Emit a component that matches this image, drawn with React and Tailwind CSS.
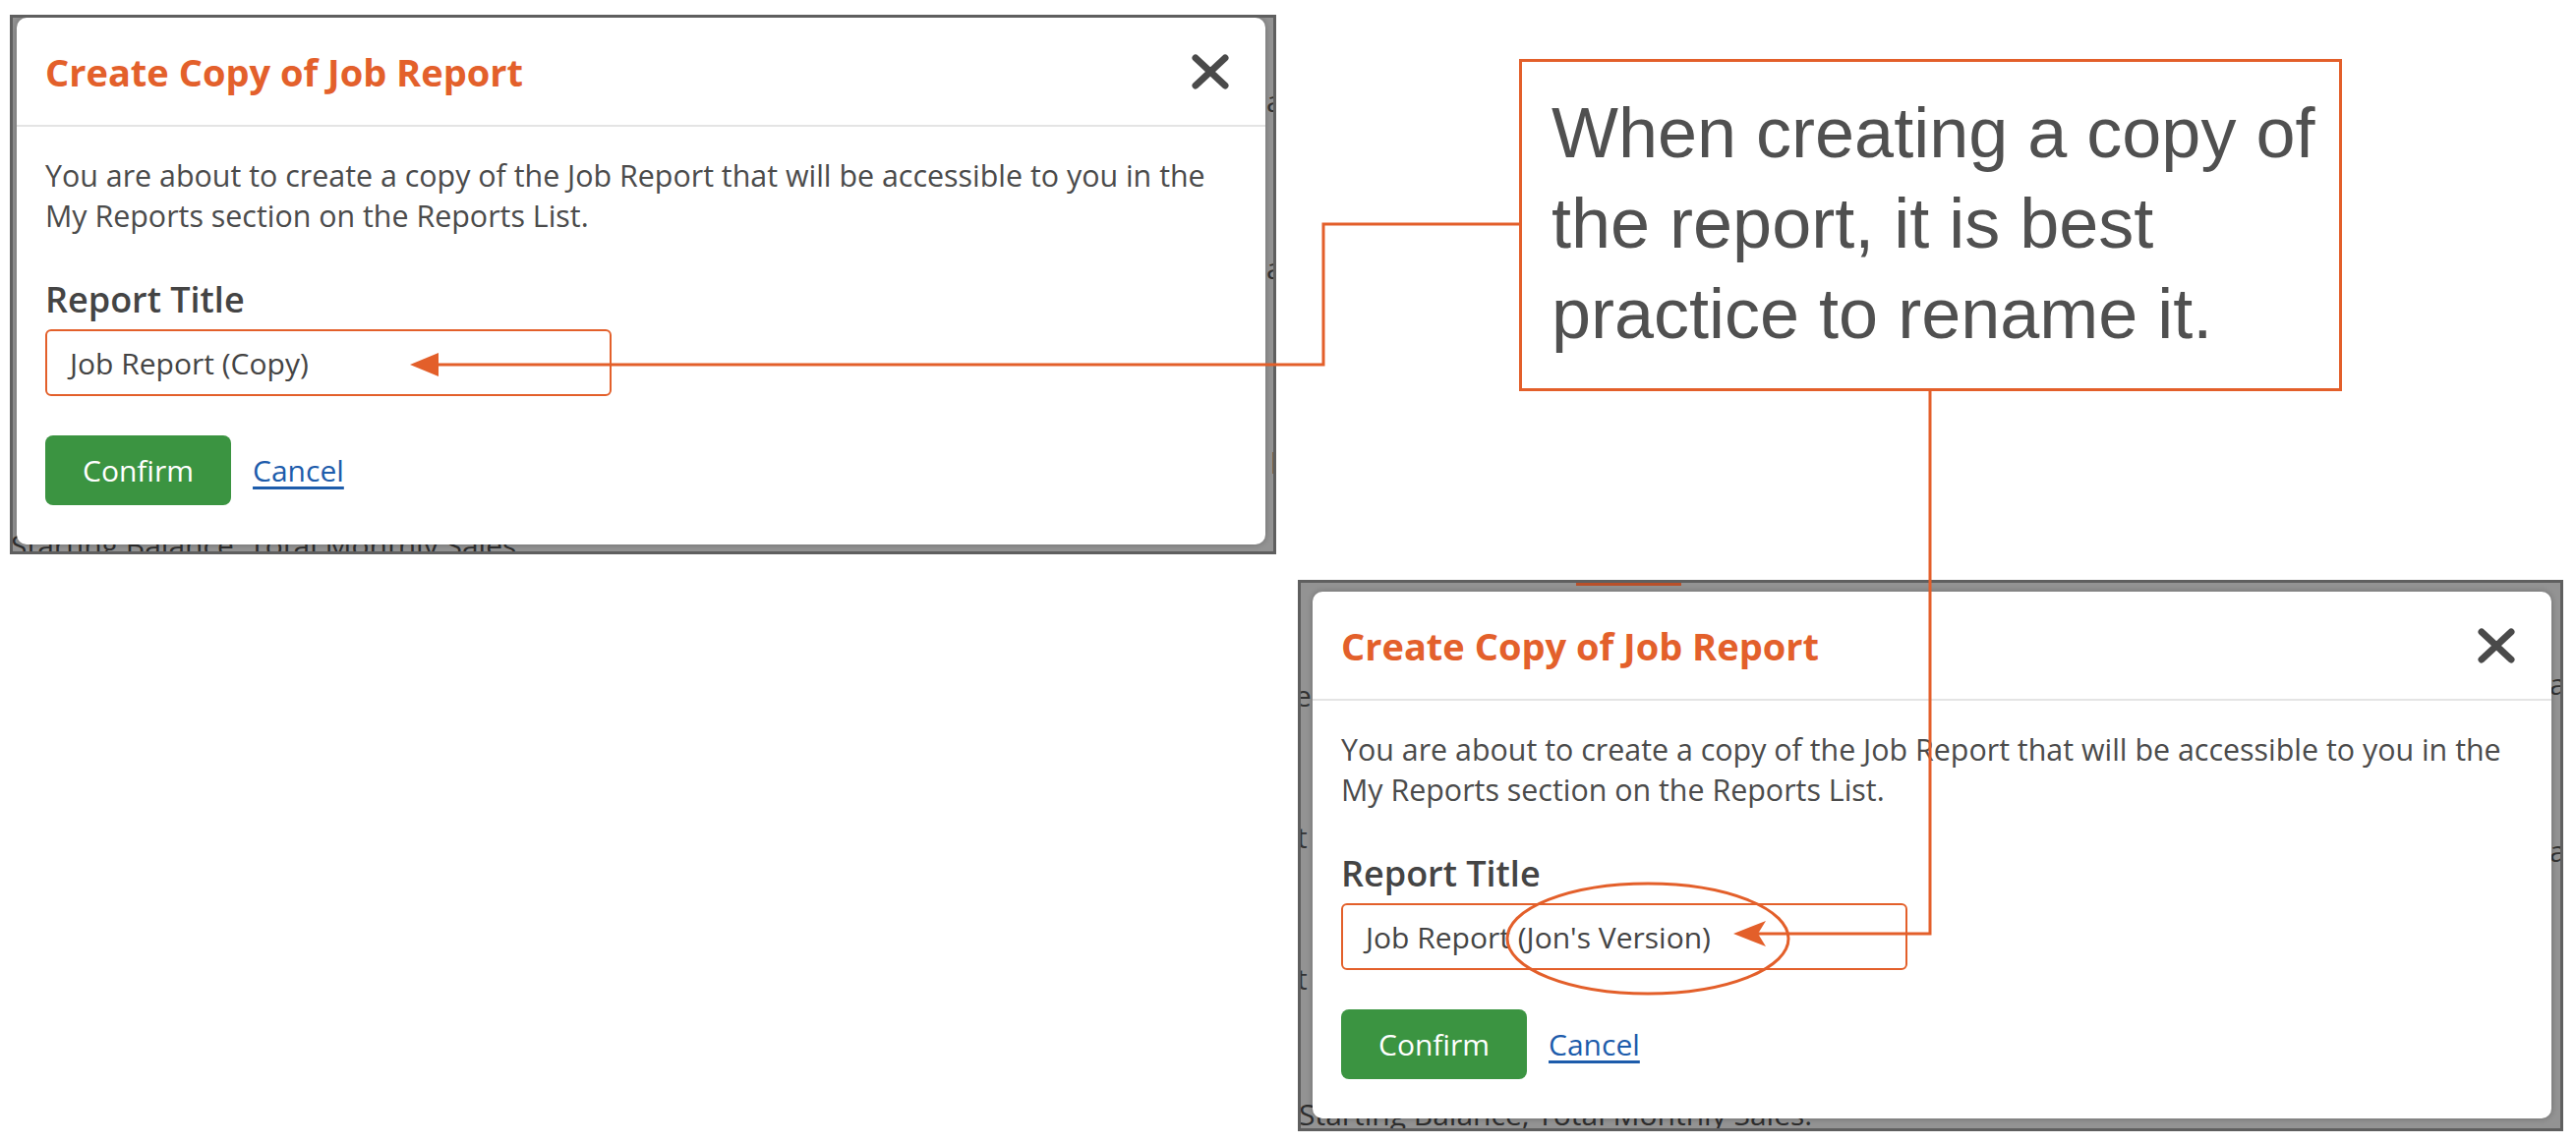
import React from 'react'

const ORANGE = '#e35f2a'

function CloseIcon() {
  return (
    <svg width="38" height="36" viewBox="0 0 38 36" fill="none">
      <path d="M4 4 L34 32 M34 4 L4 32" stroke="#4a4a4a" strokeWidth="7" strokeLinecap="round" />
    </svg>
  )
}

function CopyDialog({ value, width }) {
  return (
    <div className={`relative z-10 flex flex-col bg-white rounded-[10px] shadow-[0_0_6px_rgba(0,0,0,0.25)] ${width}`}>
      <div className="flex h-[111px] items-center justify-between border-b-2 border-[#e4e4e4] pl-[29px] pr-[37px]">
        <h2 className="text-[38px] font-bold leading-none text-[#e3602b]">Create Copy of Job Report</h2>
        <CloseIcon />
      </div>
      <div className="flex flex-col px-[29px] pt-[29px] pb-[40px]">
        <p className="text-[30.4px] leading-[41px] text-[#4b4b4b]">
          You are about to create a copy of the Job Report that will be accessible to you in the My Reports section on the Reports List.
        </p>
        <label className="mt-[41px] text-[36px] font-semibold leading-[48px] text-[#444]">Report Title</label>
        <div className="mt-[6px] flex h-[68px] w-[576px] items-center rounded-[6px] border-2 border-[#e3602b] px-[23px] text-[30px] text-[#444]">
          {value}
        </div>
        <div className="mt-[40px] flex items-center gap-[22px]">
          <button className="h-[71px] rounded-[8px] bg-[#3b9441] px-[38px] text-[30px] text-white">Confirm</button>
          <a className="text-[30px] text-[#1d5cab] underline underline-offset-[5px]">Cancel</a>
        </div>
      </div>
    </div>
  )
}

function Frame({ children, className, bits }) {
  return (
    <div className={`relative overflow-hidden border-[3px] border-[#5f5f5f] bg-[#939393] ${className}`}>
      {bits}
      {children}
    </div>
  )
}

export default function App() {
  return (
    <div className="relative h-[1164px] w-[2620px] overflow-hidden bg-white font-['Open_Sans',sans-serif]">
      <div className="flex items-start">
        <Frame
          className="ml-[10px] mt-[15px] pl-[4px] pr-[8px] pb-[7px]"
          bits={
            <>
              <span className="absolute left-[1275px] top-[62px] text-[30px] text-[#333]">a</span>
              <span className="absolute left-[1275px] top-[232px] text-[30px] text-[#333]">a</span>
              <span className="absolute left-[1279px] top-[430px] text-[30px] text-[#333]">l</span>
              <span className="absolute -left-[14px] top-[88px] text-[30px] text-[#333]">(</span>
              <span className="absolute left-[-2px] top-[514px] whitespace-nowrap text-[30px] text-[#2e2e2e]">Starting Balance, Total Monthly Sales</span>
            </>
          }
        >
          <CopyDialog value="Job Report (Copy)" width="w-[1270px]" />
        </Frame>

        <div className="ml-[22px] flex flex-col">
          <div className="ml-[225px] mt-[60px] h-[338px] w-[837px] border-[3px] border-[#e35f2a] pl-[30px] pt-[26px] font-['Liberation_Sans',Arial,sans-serif] text-[72px] leading-[92px] text-[#505050]">
            When creating a copy of<br />
            the report, it is best<br />
            practice to rename it.
          </div>

          <Frame
            className="mt-[192px] pl-[12px] pt-[9px] pr-[9px] pb-[10px]"
            bits={
              <>
                <div className="absolute left-[280px] top-0 h-[3px] w-[107px] bg-[#b9502a]" />
                <span className="absolute -left-[6px] top-[92px] text-[30px] text-[#333]">e</span>
                <span className="absolute -left-[4px] top-[236px] text-[30px] text-[#333]">t</span>
                <span className="absolute -left-[4px] top-[380px] text-[30px] text-[#333]">t</span>
                <span className="absolute left-[1270px] top-[80px] text-[30px] text-[#333]">a</span>
                <span className="absolute left-[1270px] top-[250px] text-[30px] text-[#333]">a</span>
                <span className="absolute left-[-2px] top-[518px] whitespace-nowrap text-[30px] text-[#2e2e2e]">Starting Balance, Total Monthly Sales.</span>
              </>
            }
          >
            <CopyDialog value="Job Report (Jon's Version)" width="w-[1260px]" />
          </Frame>
        </div>
      </div>

      {/* callout connectors and highlight */}
      <svg className="pointer-events-none absolute inset-0 z-20" width="2620" height="1164">
        <polyline points="1545,228 1346,228 1346,371 440,371" fill="none" stroke={ORANGE} strokeWidth="3" />
        <polygon points="417,371 446,359 446,383" fill={ORANGE} />
        <polyline points="1963,398 1963,950 1785,950" fill="none" stroke={ORANGE} strokeWidth="3" />
        <polygon points="1763,950 1796,937 1788,950 1796,963" fill={ORANGE} />
        <ellipse cx="1676" cy="955" rx="143" ry="56" fill="none" stroke={ORANGE} strokeWidth="3" />
      </svg>
    </div>
  )
}
